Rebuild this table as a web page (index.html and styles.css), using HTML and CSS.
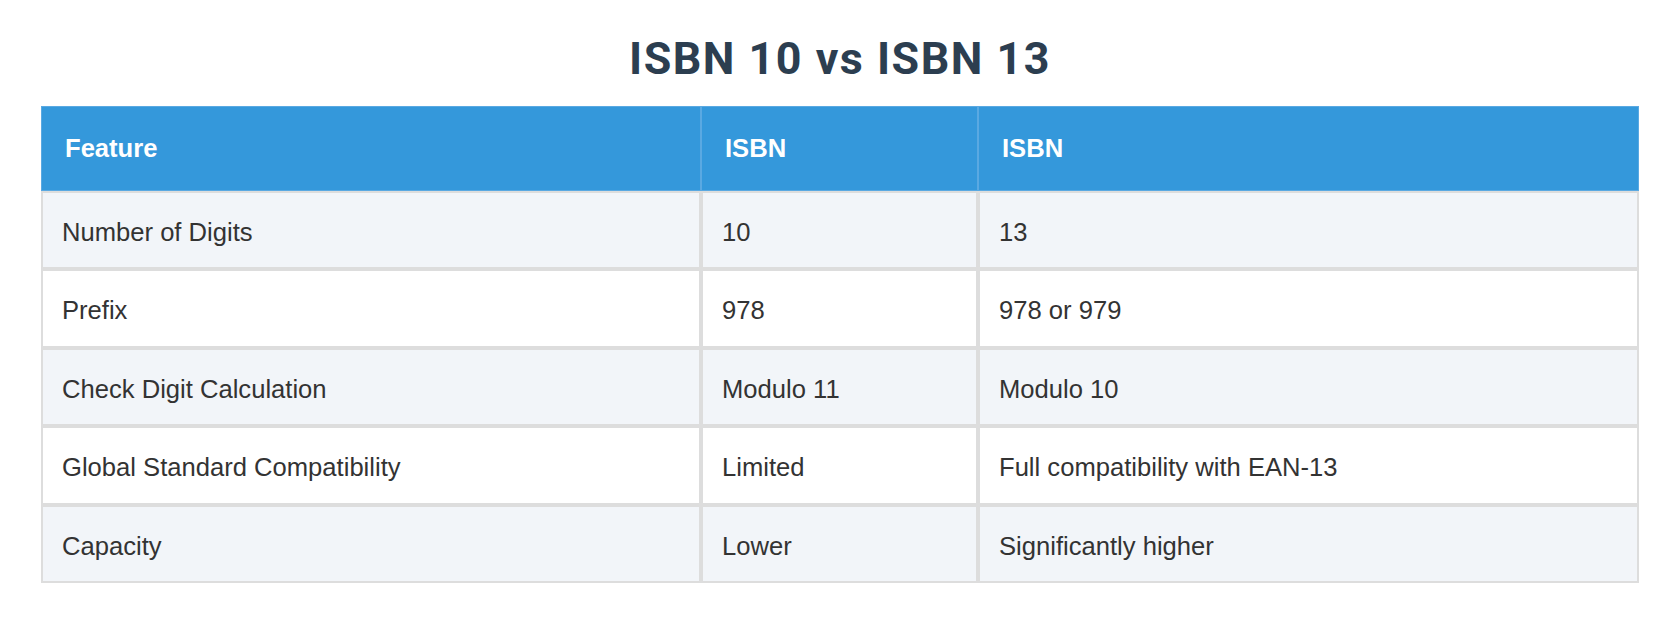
FILE: index.html
```html
<!DOCTYPE html>
<html lang="en">
<head>
<meta charset="utf-8">
<title>ISBN 10 vs ISBN 13</title>
<link rel="stylesheet" href="styles.css">
</head>
<body>
<div class="page">
  <h1 class="title">ISBN 10 vs ISBN 13</h1>
  <table class="compare">
    <colgroup>
      <col class="c1"><col class="c2"><col class="c3">
    </colgroup>
    <thead>
      <tr><th>Feature</th><th>ISBN</th><th>ISBN</th></tr>
    </thead>
    <tbody>
      <tr><td>Number of Digits</td><td>10</td><td>13</td></tr>
      <tr><td>Prefix</td><td>978</td><td>978 or 979</td></tr>
      <tr><td>Check Digit Calculation</td><td>Modulo 11</td><td>Modulo 10</td></tr>
      <tr><td>Global Standard Compatibility</td><td>Limited</td><td>Full compatibility with EAN-13</td></tr>
      <tr><td>Capacity</td><td>Lower</td><td>Significantly higher</td></tr>
    </tbody>
  </table>
</div>
</body>
</html>
```
FILE: styles.css
```css
html, body {
  margin: 0;
  padding: 0;
  background: #ffffff;
}
.page {
  padding: 0 41px;
  font-family: "Liberation Sans", Arial, sans-serif;
  color: #333333;
}
.title {
  font-family: Roboto, "Liberation Sans", sans-serif;
  font-weight: 700;
  font-size: 44.8px;
  line-height: 52px;
  letter-spacing: 1.5px;
  color: #2c3e50;
  text-align: center;
  margin: 33px 0 21px;
}
.compare {
  width: 100%;
  table-layout: fixed;
  border-collapse: separate;
  border-spacing: 0;
  font-size: 25.6px;
}
.c1 { width: 660px; }
.c2 { width: 277px; }
.c3 { width: 661px; }
.compare th {
  background: #3498db;
  color: #ffffff;
  font-weight: 700;
  text-align: left;
  line-height: 30px;
  padding: 26px 20px 27px 23px;
  border: 1px solid #5aa9e2;
}
.compare td {
  line-height: 30.4px;
  padding: 24px 18px 20px 19px;
  border: 2px solid #dddddd;
  text-align: left;
}
.compare tbody tr:nth-child(odd) td {
  background: #f2f5f9;
}
.compare tbody tr:nth-child(even) td {
  background: #ffffff;
}
```
